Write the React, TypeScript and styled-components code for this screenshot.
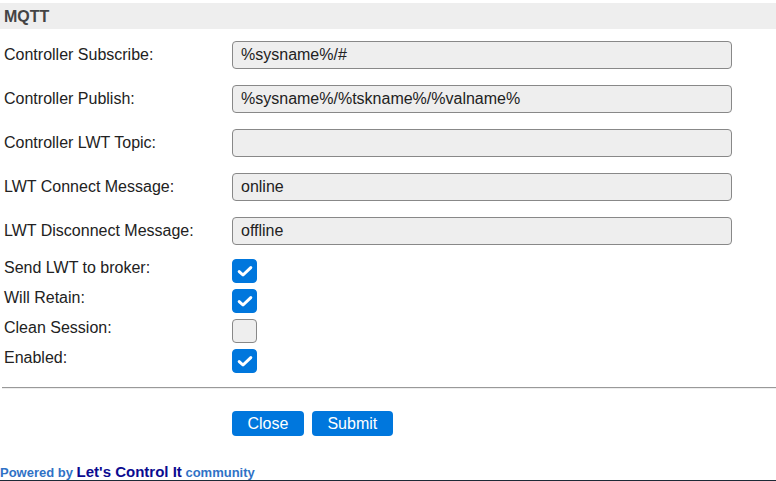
import { createGlobalStyle, styled } from "styled-components"

const Global = createGlobalStyle`
    body {
        margin: 0;
        background: #fff;
        font-family: "Liberation Sans", Arial, sans-serif;
        color: #222;
    }
`

const Page = styled.div`
    display: flex;
    flex-direction: column;
    padding-top: 3px;
    width: 776px;
`

const SectionHeader = styled.div`
    height: 26px;
    line-height: 27px;
    background: #eee;
    padding-left: 4px;
    font-size: 16px;
    font-weight: bold;
    color: #444;
`

const Form = styled.div`
    display: flex;
    flex-direction: column;
    margin-top: 4px;
`

const Row = styled.div<{ $check?: boolean }>`
    display: flex;
    align-items: ${(p) => (p.$check ? "flex-start" : "center")};
    height: ${(p) => (p.$check ? "30px" : "44px")};
`

const Label = styled.div<{ $check?: boolean }>`
    width: 228px;
    padding-left: 4px;
    font-size: 16px;
    line-height: ${(p) => (p.$check ? "24px" : "20px")};
    margin-top: ${(p) => (p.$check ? "0" : "-1px")};
`

const CheckRows = styled.div`
    display: flex;
    flex-direction: column;
    margin-top: 3px;
`

const TextInput = styled.input`
    box-sizing: border-box;
    width: 500px;
    height: 28px;
    padding: 0 8px;
    background: #eee;
    border: 1px solid #888;
    border-radius: 4px;
    font-family: inherit;
    font-size: 16px;
    color: #222;
    outline: none;
`

const Box = styled.div<{ $on: boolean }>`
    box-sizing: border-box;
    width: 25px;
    height: 24px;
    margin-top: 3px;
    border-radius: 4px;
    display: flex;
    align-items: center;
    justify-content: center;
    background: ${(p) => (p.$on ? "#0077dd" : "#eee")};
    border: 1px solid ${(p) => (p.$on ? "#0077dd" : "#888")};
`

const Rule = styled.hr`
    margin: 11px 0 0 2px;
    border: none;
    border-top: 1px solid #999;
    border-bottom: 1px solid #eee;
`

const Buttons = styled.div`
    display: flex;
    gap: 8px;
    margin-top: 22px;
    padding-left: 232px;
`

const Button = styled.button`
    height: 25px;
    padding: 0 15.5px;
    border: none;
    border-radius: 4px;
    background: #0077dd;
    color: #fff;
    font-family: inherit;
    font-size: 16px;
    cursor: pointer;
`

const Footer = styled.div`
    margin-top: 24px;
    height: 20px;
    line-height: 24px;
    border-bottom: 1px solid #1d2a36;
    font-size: 13px;
    font-weight: bold;
    color: #2f72c6;
    white-space: nowrap;

    & b {
        font-size: 15px;
        color: #0b0b90;
    }
`

const Check = () => (
    <svg width="16" height="13" viewBox="0 0 16 13">
        <path d="M2.2 6.6 L6 10 L13.8 2.6" fill="none" stroke="#fff" strokeWidth="3" strokeLinecap="round" strokeLinejoin="round" />
    </svg>
)

const fields = [
    ["Controller Subscribe:", "%sysname%/#"],
    ["Controller Publish:", "%sysname%/%tskname%/%valname%"],
    ["Controller LWT Topic:", ""],
    ["LWT Connect Message:", "online"],
    ["LWT Disconnect Message:", "offline"],
]

const checks: [string, boolean][] = [
    ["Send LWT to broker:", true],
    ["Will Retain:", true],
    ["Clean Session:", false],
    ["Enabled:", true],
]

export default function App() {
    return (
        <Page>
            <Global />
            <SectionHeader>MQTT</SectionHeader>
            <Form>
                {fields.map(([label, value]) => (
                    <Row key={label}>
                        <Label>{label}</Label>
                        <TextInput defaultValue={value} />
                    </Row>
                ))}
                <CheckRows>
                    {checks.map(([label, on]) => (
                        <Row $check key={label}>
                            <Label $check>{label}</Label>
                            <Box $on={on}>{on && <Check />}</Box>
                        </Row>
                    ))}
                </CheckRows>
            </Form>
            <Rule />
            <Buttons>
                <Button>Close</Button>
                <Button>Submit</Button>
            </Buttons>
            <Footer>
                Powered by <b>Let's Control It</b> community
            </Footer>
        </Page>
    )
}
